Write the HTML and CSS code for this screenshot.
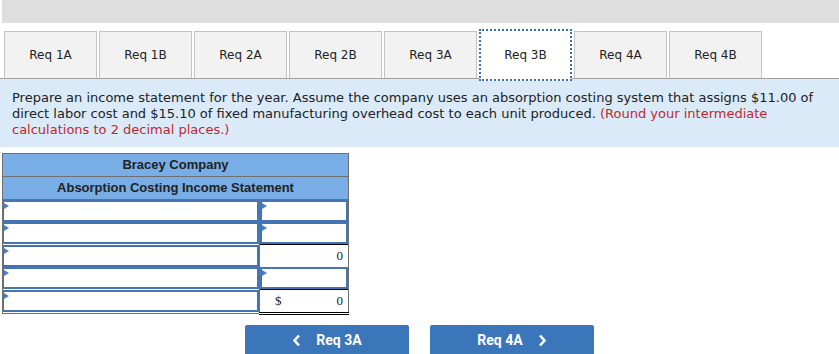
FILE: index.html
```html
<!DOCTYPE html>
<html>
<head>
<meta charset="utf-8">
<link rel="stylesheet" href="styles.css">
</head>
<body>
<div class="page">
  <div class="topbar"></div>
  <div class="tabs">
    <div class="tab">Req 1A</div>
    <div class="tab">Req 1B</div>
    <div class="tab">Req 2A</div>
    <div class="tab">Req 2B</div>
    <div class="tab">Req 3A</div>
    <div class="tab active">Req 3B</div>
    <div class="tab">Req 4A</div>
    <div class="tab">Req 4B</div>
  </div>
  <div class="prompt">Prepare an income statement for the year. Assume the company uses an absorption costing system that assigns $11.00 of direct labor cost and $15.10 of fixed manufacturing overhead cost to each unit produced. <span class="red">(Round your intermediate calculations to 2 decimal places.)</span></div>

  <table class="stmt">
    <tr><th colspan="2">Bracey Company</th></tr>
    <tr><th colspan="2">Absorption Costing Income Statement</th></tr>
    <tr><td class="lbl"><div class="inp"><span class="tri"></span></div></td><td class="amt"><div class="inp"><span class="tri"></span></div></td></tr>
    <tr><td class="lbl"><div class="inp"><span class="tri"></span></div></td><td class="amt"><div class="inp"><span class="tri"></span></div></td></tr>
    <tr><td class="lbl"><div class="inp"><span class="tri"></span></div></td><td class="amt calc"><div class="val"><span></span><span>0</span></div></td></tr>
    <tr><td class="lbl"><div class="inp"><span class="tri"></span></div></td><td class="amt"><div class="inp"><span class="tri"></span></div></td></tr>
    <tr><td class="lbl"><div class="inp"><span class="tri"></span></div></td><td class="amt calc total"><div class="val"><span>$</span><span>0</span></div></td></tr>
  </table>

  <div class="nav">
    <div class="btn"><svg class="chev" width="9" height="13" viewBox="0 0 9 13"><polyline points="7,1.5 2.5,6.5 7,11.5" fill="none" stroke="#fff" stroke-width="2.6"/></svg><span>Req 3A</span></div>
    <div class="btn"><span>Req 4A</span><svg class="chev" width="9" height="13" viewBox="0 0 9 13"><polyline points="2,1.5 6.5,6.5 2,11.5" fill="none" stroke="#fff" stroke-width="2.6"/></svg></div>
  </div>
</div>
</body>
</html>
```
FILE: styles.css
```css
html, body { margin: 0; padding: 0; background: #fff; }
body { width: 839px; height: 354px; overflow: hidden; }
.page { padding-left: 2px; }
.topbar { height: 23px; background: #dedede; }
.tabs {
  display: flex;
  gap: 2px;
  margin-top: 8px;
  border-bottom: 1px solid #a0a0a0;
  height: 47px;
  margin-left: -2px;
  padding-left: 4px;
}
.tab {
  width: 91px;
  height: 46px;
  border: 1px solid #c4c4c4;
  border-bottom: none;
  background: #f2f2f2;
  font: 12px "DejaVu Sans", Verdana, sans-serif;
  color: #222;
  display: flex;
  align-items: center;
  justify-content: center;
}
.tab.active {
  background: #fff;
  border: 2px dotted #3a72b8;
  width: 89px;
  height: 48px;
  margin-top: -2px;
  position: relative;
  z-index: 1;
}
.prompt {
  background: #dbeaf8;
  font: 13px "DejaVu Sans", Verdana, sans-serif;
  line-height: 16px;
  color: #222;
  padding: 11px 10px 9px 12px;
  margin-left: -2px;
}
.red { color: #c0282d; }
.stmt {
  margin-top: 6px;
  border-collapse: collapse;
  width: 347px;
  font-family: "Liberation Sans", Arial, sans-serif;
}
.stmt th {
  background: #78ade5;
  border: 1px solid #6f6f6f;
  height: 21px;
  line-height: 20px;
  padding: 0 0 1px 0;
  font-size: 13px;
  font-weight: bold;
  color: #222;
}
.stmt td {
  padding: 0;
  height: 22px;
  line-height: 0;
  font-size: 0;
  vertical-align: top;
  border-left: 1px solid #6f6f6f;
  border-right: 1px solid #6f6f6f;
}
.stmt td.lbl { width: 256px; }
.stmt tr:last-child td.lbl { border-bottom: 1px solid #6f6f6f; }
.inp {
  box-sizing: border-box;
  position: relative;
  height: 22px;
  border: 2px solid #4474b3;
  border-left-width: 1px;
  background: #fff;
}
.tri {
  position: absolute;
  left: 0;
  top: 1px;
  width: 0;
  height: 0;
  border-top: 3px solid transparent;
  border-bottom: 3px solid transparent;
  border-left: 5px solid #4a7fc0;
}
.amt .inp { border-left-width: 2px; }
.calc { border-top: 1px solid #000; }
.val {
  box-sizing: border-box;
  display: flex;
  justify-content: space-between;
  font: 13px "Liberation Serif", "Times New Roman", serif;
  line-height: 21px;
  color: #222;
  padding: 0 5px 0 15px;
  height: 21px;
  align-items: center;
}
.total { border-bottom: 3px double #000; }
.nav {
  display: flex;
  justify-content: center;
  gap: 21px;
  margin-top: 10px;
  margin-left: -2px;
}
.btn {
  width: 164px;
  height: 32px;
  background: #3b76bb;
  border-radius: 2px;
  color: #fff;
  font: bold 14px Roboto, "Liberation Sans", sans-serif;
  display: flex;
  align-items: center;
  justify-content: center;
  gap: 15px;
  padding-bottom: 2px;
  box-sizing: border-box;
}
.chev { display: block; }
```
